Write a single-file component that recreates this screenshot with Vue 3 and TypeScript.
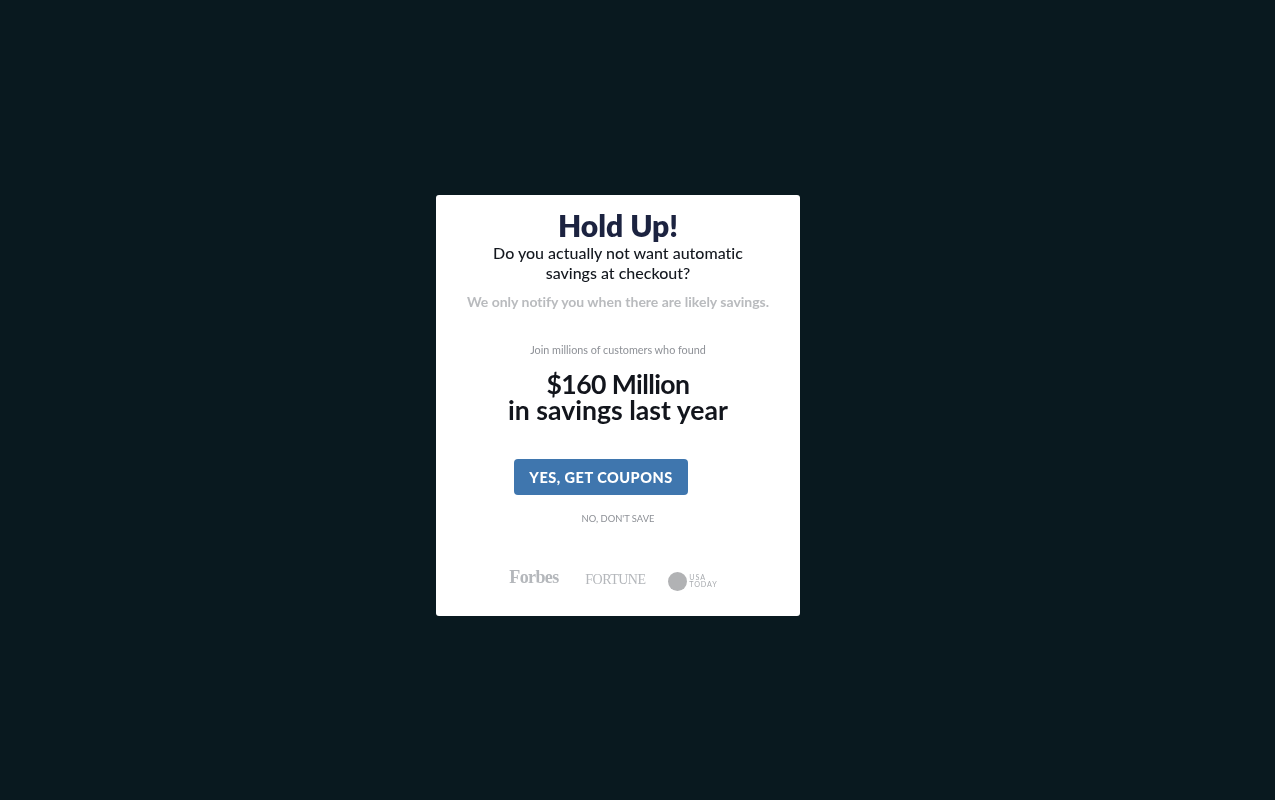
<script setup lang="ts">
const heading: string = 'Hold Up!'
</script>

<template>
  <div class="overlay">
    <section class="modal">
      <h1 class="title">{{ heading }}</h1>
      <p class="question">Do you actually not want automatic<br />savings at checkout?</p>
      <p class="notice">We only notify you when there are likely savings.</p>
      <p class="join">Join millions of customers who found</p>
      <p class="amount"><span class="figure">$160 Million</span><br />in savings last year</p>
      <button class="yes" type="button">YES, GET COUPONS</button>
      <a class="no">NO, DON'T SAVE</a>
      <div class="press">
        <span class="forbes">Forbes</span>
        <span class="fortune">FORTUNE</span>
        <span class="usa">
          <i class="dot"></i>
          <span class="usa-text">USA<br />TODAY</span>
        </span>
      </div>
    </section>
  </div>
</template>

<style scoped>
.overlay {
  min-height: 800px;
  box-sizing: border-box;
  background: #09191f;
  padding: 195px 0 0 436px;
  font-family: Lato, "Liberation Sans", sans-serif;
  font-variant-ligatures: none;
}
.modal {
  width: 364px;
  height: 421px;
  box-sizing: border-box;
  background: #fff;
  border-radius: 3px;
  padding-top: 12.5px;
  display: flex;
  flex-direction: column;
  align-items: center;
  text-align: center;
  filter: blur(0.35px);
}
.title {
  margin: 0;
  font-size: 30px;
  line-height: 34px;
  font-weight: 800;
  color: #1c2340;
}
.question {
  margin: 1.5px 0 0;
  font-size: 16px;
  line-height: 20px;
  font-weight: 500;
  color: #14181f;
}
.notice {
  margin: 9px 0 0;
  font-size: 14px;
  line-height: 20px;
  font-weight: 700;
  color: #b9bbbe;
}
.join {
  margin: 31px 0 0;
  font-size: 10.8px;
  line-height: 14px;
  color: #8d9096;
}
.amount {
  margin: 14px 0 0;
  font-size: 26.6px;
  line-height: 26px;
  font-weight: 700;
  color: #12151c;
}
.figure {
  letter-spacing: -0.6px;
}
.yes {
  margin: 36px 0 0 -34px;
  width: 174px;
  height: 36px;
  border: 0;
  border-radius: 4px;
  background: #3f76ae;
  color: #fff;
  font: 900 14.5px/36px Lato, "Liberation Sans", sans-serif;
  letter-spacing: 0.5px;
}
.no {
  margin-top: 18px;
  font-size: 9.4px;
  line-height: 12px;
  color: #8d9096;
}
.press {
  margin-top: 47px;
  margin-left: -9px;
  display: flex;
  align-items: center;
  color: #b4b7bb;
}
.forbes {
  font: 700 18px/18px "Liberation Serif", serif;
  letter-spacing: -0.6px;
  width: 76px;
  text-align: left;
  position: relative;
  top: -5px;
}
.fortune {
  font: 400 14px/16px "Liberation Serif", serif;
  letter-spacing: -0.5px;
  width: 83px;
  text-align: left;
  position: relative;
  top: -2px;
}
.usa {
  display: flex;
  align-items: center;
  gap: 2px;
}
.dot {
  width: 19px;
  height: 19px;
  border-radius: 50%;
  background: #b1b2b4;
}
.usa-text {
  font-size: 7.2px;
  line-height: 6.5px;
  letter-spacing: 0.9px;
  text-align: left;
  color: #a8abaf;
}
</style>
